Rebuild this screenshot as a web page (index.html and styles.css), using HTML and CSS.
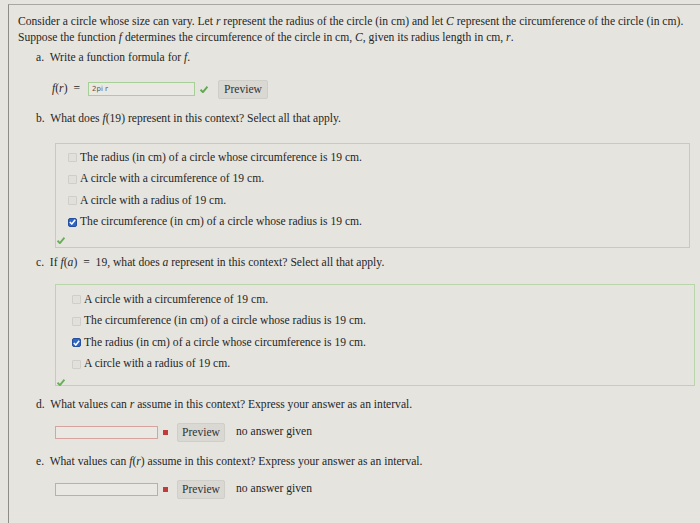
FILE: index.html
```html
<!DOCTYPE html>
<html lang="en">
<head>
    <meta charset="UTF-8">
    <meta name="viewport" content="width=device-width, initial-scale=1.0">
    <title>Circle Circumference Problem</title>
    <link rel="stylesheet" href="styles.css">
</head>
<body>

<div class="page">
    <p class="intro">Consider a circle whose size can vary. Let <i>r</i> represent the radius of the circle (in cm) and let <i>C</i> represent the circumference of the circle (in cm).<br>Suppose the function <i>f</i> determines the circumference of the circle in cm, <i>C</i>, given its radius length in cm, <i>r</i>.</p>

    <div class="q q-a">a.&nbsp; Write a function formula for <i>f</i>.</div>
    <div class="answer-row formula">
        <span class="math"><i>f</i>(<i>r</i>) <span class="eq">=</span></span>
        <span class="field ok">2pi r</span>
        <svg class="mark" width="8" height="7" viewBox="0 0 9 8"><path d="M0.5 4.2 L3.2 7 L8.5 0.8" fill="none" stroke="#5fa84e" stroke-width="2.2"/></svg>
        <button class="preview">Preview</button>
    </div>

    <div class="q q-b">b.&nbsp; What does <i>f</i>(19) represent in this context? Select all that apply.</div>
    <div class="choices choices-b">
        <label class="option"><span class="box"></span>The radius (in cm) of a circle whose circumference is 19 cm.</label>
        <label class="option"><span class="box"></span>A circle with a circumference of 19 cm.</label>
        <label class="option"><span class="box"></span>A circle with a radius of 19 cm.</label>
        <label class="option"><span class="box checked"><svg width="7" height="6" viewBox="0 0 7 6"><path d="M0.8 3 L2.8 5 L6.2 0.8" fill="none" stroke="#fff" stroke-width="1.5"/></svg></span>The circumference (in cm) of a circle whose radius is 19 cm.</label>
        <div class="verdict"><svg width="8" height="7" viewBox="0 0 9 8"><path d="M0.5 4.2 L3.2 7 L8.5 0.8" fill="none" stroke="#6aae5a" stroke-width="2.2"/></svg></div>
    </div>

    <div class="q q-c">c.&nbsp; If <i>f</i>(<i>a</i>) <span class="eq">=</span> 19, what does <i>a</i> represent in this context? Select all that apply.</div>
    <div class="choices choices-c">
        <label class="option"><span class="box"></span>A circle with a circumference of 19 cm.</label>
        <label class="option"><span class="box"></span>The circumference (in cm) of a circle whose radius is 19 cm.</label>
        <label class="option"><span class="box checked"><svg width="7" height="6" viewBox="0 0 7 6"><path d="M0.8 3 L2.8 5 L6.2 0.8" fill="none" stroke="#fff" stroke-width="1.5"/></svg></span>The radius (in cm) of a circle whose circumference is 19 cm.</label>
        <label class="option"><span class="box"></span>A circle with a radius of 19 cm.</label>
        <div class="verdict"><svg width="8" height="7" viewBox="0 0 9 8"><path d="M0.5 4.2 L3.2 7 L8.5 0.8" fill="none" stroke="#6aae5a" stroke-width="2.2"/></svg></div>
    </div>

    <div class="q q-d">d.&nbsp; What values can <i>r</i> assume in this context? Express your answer as an interval.</div>
    <div class="answer-row interval">
        <span class="field empty"></span>
        <span class="wrong"></span>
        <button class="preview">Preview</button>
        <span class="status">no answer given</span>
    </div>

    <div class="q q-e">e.&nbsp; What values can <i>f</i>(<i>r</i>) assume in this context? Express your answer as an interval.</div>
    <div class="answer-row interval">
        <span class="field empty"></span>
        <span class="wrong"></span>
        <button class="preview">Preview</button>
        <span class="status">no answer given</span>
    </div>
</div>

</body>
</html>
```

FILE: styles.css
```css
body {
    margin: 0;
    background: #e5e4df;
    font-family: "Liberation Serif", "Times New Roman", serif;
    font-size: 11.6px;
    line-height: 16px;
    color: #262626;
}
.page {
    margin: 4px 0 0 8px;
    border-top: 1px solid #a8a7a2;
    border-left: 1px solid #8d8c88;
    padding: 9px 0 40px 9px;
}
.intro {
    margin: 0;
    white-space: nowrap;
}
.q {
    padding-left: 18px;
    white-space: nowrap;
}
.q-a {
    margin-top: 4px;
}
.q-b {
    margin-top: 12px;
}
.q-c {
    margin-top: 7px;
}
.q-d {
    margin-top: 11px;
}
.q-e {
    margin-top: 12px;
}
.eq {
    padding: 0 3px;
}
.answer-row {
    display: flex;
    align-items: center;
    height: 20px;
}
.formula {
    margin: 13px 0 0 34px;
}
.math {
    width: 36px;
}
.field {
    display: block;
    box-sizing: border-box;
    height: 14px;
    background: #e9e8e3;
    font-family: "DejaVu Sans", sans-serif;
    font-size: 7px;
    line-height: 12px;
    color: #555;
    padding-left: 3px;
}
.field.ok {
    width: 107px;
    border: 1px solid #a7cf98;
}
.field.empty {
    width: 103px;
    height: 13px;
    border: 1px solid #d6a3a0;
}
.mark {
    margin-left: 5px;
}
.preview {
    margin-left: 10px;
    height: 19px;
    width: 50px;
    padding: 0;
    background: #d9d8d3;
    border: 1px solid #cfcec9;
    border-radius: 2px;
    font-family: "Liberation Serif", "Times New Roman", serif;
    font-size: 11.6px;
    color: #333;
}
.choices {
    margin: 16px 10px 0 37px;
    border: 1px solid #b8d6aa;
}
.choices-b {
    padding: 3px 12px 4px;
}
.choices-c {
    margin-top: 13px;
    margin-right: 5px;
    padding: 4px 16px 1px;
}
.option {
    display: flex;
    align-items: center;
    height: 21.5px;
    white-space: nowrap;
}
.box {
    display: flex;
    align-items: center;
    justify-content: center;
    box-sizing: border-box;
    width: 9px;
    height: 9px;
    margin-right: 3px;
    background: #e1e0db;
    border: 1px solid #cfcec9;
    border-radius: 1px;
}
.box.checked {
    background: #2f67c9;
    border-color: #234f9e;
    border-radius: 2px;
}
.verdict {
    height: 10px;
    margin-left: -11px;
}
.choices-c .verdict {
    height: 9px;
    margin-left: -15px;
}
.interval {
    margin: 9px 0 0 37px;
}
.wrong {
    width: 5px;
    height: 5px;
    margin-left: 5px;
    background: #c23a3a;
}
.interval .preview {
    margin-left: 9px;
    width: 48px;
}
.status {
    margin-left: 11px;
}
```
